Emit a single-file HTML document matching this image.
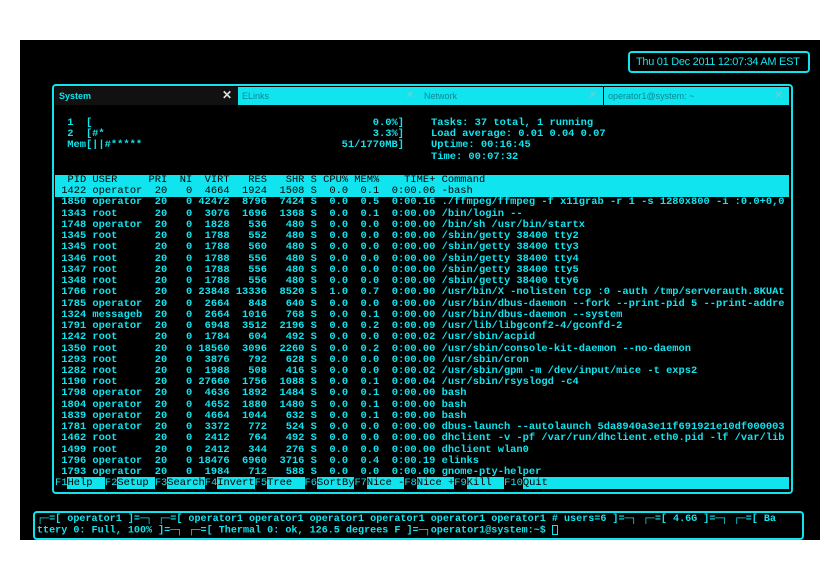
<!DOCTYPE html>
<html><head><meta charset="utf-8"><style>
*{margin:0;padding:0;box-sizing:border-box}
body{width:840px;height:565px;background:#fff;position:relative;overflow:hidden;font-family:"Liberation Mono",monospace}
.blk{position:absolute;left:20px;top:40px;width:800px;height:500px;background:#000}
.clock{position:absolute;left:628px;top:51px;width:182px;height:22px;border:2px solid #10e4ee;border-radius:4px;color:#10e4ee;font:11px "Liberation Sans",sans-serif;padding:3px 0 0 6px;letter-spacing:-0.3px}
.panel{position:absolute;left:52px;top:84px;width:741px;height:410px;border:2px solid #10e4ee;border-radius:4px}
.tab{position:absolute;top:87px;height:18px;font:9px "Liberation Sans",sans-serif;padding:4px 0 0 4px;background:#10e4ee;color:#0a8a95}
.tab span{position:absolute;right:6px;top:3px;font-size:10px;color:#7fc9cf}
pre{position:absolute;font-family:"Liberation Mono",monospace;font-size:10.4px;line-height:11.24px;color:#10e4ee;font-weight:bold;white-space:pre}
.hl{background:#10e4ee;color:#000;font-weight:normal;display:inline-block;width:734px}
.fb{position:absolute;left:55px;top:477px;width:734px;height:12px;background:#10e4ee}
.bot{position:absolute;left:33px;top:511px;width:771px;height:29px;border:2px solid #10e4ee;border-radius:4px}
</style></head><body>
<div class="blk"></div>
<div class="clock">Thu 01 Dec 2011 12:07:34 AM EST</div>
<div class="panel"></div>
<div class="tab" style="left:55px;width:183px;background:#111;color:#10e4ee;font-weight:bold">System<span style="color:#ddd;font-size:12px;top:1px">✕</span></div>
<div class="tab" style="left:238px;width:182px">ELinks<span>✕</span></div>
<div class="tab" style="left:420px;width:183px">Network<span>✕</span></div>
<div class="tab" style="left:604px;width:185px">operator1@system: ~<span>✕</span></div>
<pre style="left:61px;top:118px"> 1  [                                             0.0%]
 2  [#*                                           3.3%]
 Mem[||#*****                                51/1770MB]</pre>
<pre style="left:431px;top:118px">Tasks: 37 total, 1 running
Load average: 0.01 0.04 0.07
Uptime: 00:16:45
Time: 00:07:32</pre>
<pre style="left:55px;top:175px"><span class="hl">  PID USER     PRI  NI  VIRT   RES   SHR S CPU% MEM%    TIME+ Command</span>
<span class="hl"> 1422 operator  20   0  4664  1924  1508 S  0.0  0.1  0:00.06 -bash</span>
 1850 operator  20   0 42472  8796  7424 S  0.0  0.5  0:00.16 ./ffmpeg/ffmpeg -f x11grab -r 1 -s 1280x800 -i :0.0+0,0
 1343 root      20   0  3076  1696  1368 S  0.0  0.1  0:00.09 /bin/login --
 1748 operator  20   0  1828   536   480 S  0.0  0.0  0:00.00 /bin/sh /usr/bin/startx
 1345 root      20   0  1788   552   480 S  0.0  0.0  0:00.00 /sbin/getty 38400 tty2
 1345 root      20   0  1788   560   480 S  0.0  0.0  0:00.00 /sbin/getty 38400 tty3
 1346 root      20   0  1788   556   480 S  0.0  0.0  0:00.00 /sbin/getty 38400 tty4
 1347 root      20   0  1788   556   480 S  0.0  0.0  0:00.00 /sbin/getty 38400 tty5
 1348 root      20   0  1788   556   480 S  0.0  0.0  0:00.00 /sbin/getty 38400 tty6
 1766 root      20   0 23848 13336  8520 S  1.0  0.7  0:00.90 /usr/bin/X -nolisten tcp :0 -auth /tmp/serverauth.8KUAt
 1785 operator  20   0  2664   848   640 S  0.0  0.0  0:00.00 /usr/bin/dbus-daemon --fork --print-pid 5 --print-addre
 1324 messageb  20   0  2664  1016   768 S  0.0  0.1  0:00.00 /usr/bin/dbus-daemon --system
 1791 operator  20   0  6948  3512  2196 S  0.0  0.2  0:00.09 /usr/lib/libgconf2-4/gconfd-2
 1242 root      20   0  1784   604   492 S  0.0  0.0  0:00.02 /usr/sbin/acpid
 1350 root      20   0 18560  3096  2260 S  0.0  0.2  0:00.00 /usr/sbin/console-kit-daemon --no-daemon
 1293 root      20   0  3876   792   628 S  0.0  0.0  0:00.00 /usr/sbin/cron
 1282 root      20   0  1988   508   416 S  0.0  0.0  0:00.02 /usr/sbin/gpm -m /dev/input/mice -t exps2
 1190 root      20   0 27660  1756  1088 S  0.0  0.1  0:00.04 /usr/sbin/rsyslogd -c4
 1798 operator  20   0  4636  1892  1484 S  0.0  0.1  0:00.00 bash
 1804 operator  20   0  4652  1880  1480 S  0.0  0.1  0:00.00 bash
 1839 operator  20   0  4664  1044   632 S  0.0  0.1  0:00.00 bash
 1781 operator  20   0  3372   772   524 S  0.0  0.0  0:00.00 dbus-launch --autolaunch 5da8940a3e11f691921e10df000003
 1462 root      20   0  2412   764   492 S  0.0  0.0  0:00.00 dhclient -v -pf /var/run/dhclient.eth0.pid -lf /var/lib
 1499 root      20   0  2412   344   276 S  0.0  0.0  0:00.00 dhclient wlan0
 1796 operator  20   0 18476  6960  3716 S  0.0  0.4  0:00.19 elinks
 1793 operator  20   0  1984   712   588 S  0.0  0.0  0:00.00 gnome-pty-helper</pre>
<div class="fb"></div>
<pre style="left:55px;top:477px;line-height:12px;font-weight:normal;color:#000"><span style="background:#000;color:#10e4ee">F1</span>Help  <span style="background:#000;color:#10e4ee">F2</span>Setup <span style="background:#000;color:#10e4ee">F3</span>Search<span style="background:#000;color:#10e4ee">F4</span>Invert<span style="background:#000;color:#10e4ee">F5</span>Tree  <span style="background:#000;color:#10e4ee">F6</span>SortBy<span style="background:#000;color:#10e4ee">F7</span>Nice -<span style="background:#000;color:#10e4ee">F8</span>Nice +<span style="background:#000;color:#10e4ee">F9</span>Kill  <span style="background:#000;color:#10e4ee">F10</span>Quit</pre>
<div class="bot"></div>
<pre style="left:37px;top:514px;font-size:10.1px">┌─=[ operator1 ]=─┐ ┌─=[ operator1 operator1 operator1 operator1 operator1 operator1 # users=6 ]=─┐ ┌─=[ 4.6G ]=─┐ ┌─=[ Ba
ttery 0: Full, 100% ]=─┐ ┌─=[ Thermal 0: ok, 126.5 degrees F ]=─┐operator1@system:~$ <span style="display:inline-block;width:6px;height:10px;border:1px solid #10e4ee;vertical-align:middle"></span></pre>
</body></html>
